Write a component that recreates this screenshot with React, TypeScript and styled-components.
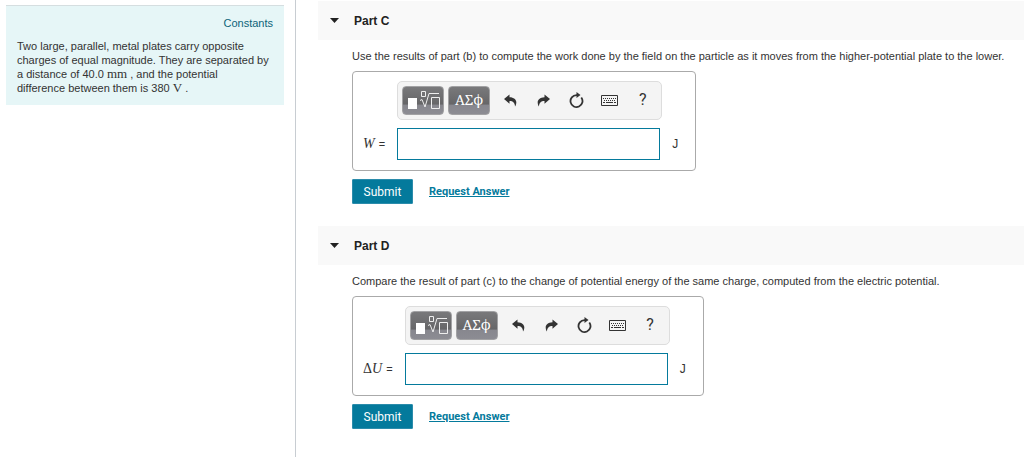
import React, { useId } from "react";
import styled, { createGlobalStyle } from "styled-components";

const GlobalStyle = createGlobalStyle`
  *, *::before, *::after { box-sizing: border-box; }
  body {
    margin: 0;
    background: #fff;
    color: #333;
    font: 11px/14px "Liberation Sans", Arial, sans-serif;
  }
`;

const Page = styled.div`
  display: flex;
  align-items: stretch;
  min-height: 100vh;
`;

const Sidebar = styled.aside`
  flex: 0 0 296px;
  padding: 5px 11px 0 6px;
  border-right: 1px solid #c8cdd2;
`;

const ProblemCard = styled.section`
  padding: 10px 11px;
  border-top: 1px solid #d5dee0;
  background: #e6f6f7;
`;

const ConstantsRow = styled.div`
  display: flex;
  justify-content: flex-end;
  margin-bottom: 9px;
`;

const ConstantsLink = styled.a`
  color: #0d6379;
  text-decoration: none;
`;

const Statement = styled.p`
  margin: 0;
`;

const MathText = styled.span`
  font-family: "Liberation Serif", "Times New Roman", serif;
  font-size: 13px;
  line-height: 1;
`;

const Main = styled.main`
  flex: 1;
  min-width: 0;
  padding: 1px 0 0 22px;
`;

const PartSection = styled.section`
  margin-bottom: 22px;
`;

const PartHeader = styled.h2`
  margin: 0;
  background: #f9f9f9;
  font-size: 12px;
`;

const PartToggle = styled.button`
  display: flex;
  align-items: center;
  gap: 15px;
  width: 100%;
  height: 39px;
  padding: 0 12px;
  border: 0;
  background: transparent;
  color: #222;
  font: bold 12px/14px "Liberation Sans", Arial, sans-serif;
  text-align: left;
`;

const PartBody = styled.div`
  padding: 9px 0 0 34px;
`;

const Prompt = styled.p`
  margin: 0 0 8px;
`;

const AnswerBox = styled.div`
  display: inline-grid;
  grid-template-columns: auto 265px auto;
  align-items: center;
  row-gap: 8px;
  padding: 9px 17px 10px 10px;
  border: 1px solid #aaa;
  border-radius: 4px;
  vertical-align: top;
`;

const Toolbar = styled.div`
  grid-column: 2;
  display: flex;
  align-items: center;
  gap: 4px;
  height: 39px;
  padding: 0 0 1px 4px;
  border: 1px solid #ddd;
  border-radius: 5px;
  background: #f4f4f4;
`;

const PaletteButton = styled.button`
  display: flex;
  flex: none;
  align-items: center;
  justify-content: center;
  width: 42px;
  height: 29px;
  padding: 0;
  border: 1px solid #a2a2a4;
  border-radius: 4px;
  background: linear-gradient(#79797b, #666668 64%, #87878e 66%, #8c8c93);
  color: #fff;
  font: 14px/18px "Noto Serif", "DejaVu Serif", serif;
`;

const ToolGroup = styled.div`
  display: flex;
  flex: none;
  align-items: center;
`;

const ToolButton = styled.button`
  display: flex;
  flex: none;
  align-items: center;
  justify-content: center;
  width: 33px;
  height: 29px;
  padding: 0;
  border: 0;
  background: transparent;
  color: #333;
  font: 16px/18px Roboto, Arial, sans-serif;
`;

const AnswerLabel = styled.label`
  grid-column: 1;
  padding-right: 12px;
`;

const Variable = styled.span`
  margin-right: 1px;
  font: 14px/14px "Liberation Serif", "Times New Roman", serif;
`;

const AnswerInput = styled.input`
  width: 263px;
  height: 32px;
  padding: 0 8px;
  border: 1px solid #047a9c;
  border-radius: 0;
  background: #fff;
  color: #333;
  font: inherit;
  outline: 0;
`;

const Unit = styled.span`
  padding-left: 10px;
  font-size: 12px;
`;

const Actions = styled.div`
  display: flex;
  align-items: center;
  gap: 16px;
  margin-top: 8px;
`;

const SubmitButton = styled.button`
  width: 61px;
  height: 25px;
  padding: 0;
  border: 1px solid #2b8cab;
  border-radius: 1px;
  background: #047a9c;
  color: #fff;
  font: 12px/14px Roboto, Arial, sans-serif;
`;

const RequestLink = styled.a`
  color: #047a9c;
  font: bold 11px/13px Roboto, Arial, sans-serif;
  text-decoration: underline;
`;

const Caret = () => (
  <svg width="9" height="5" viewBox="0 0 9 5" aria-hidden="true">
    <path d="M0 0h9L4.5 5z" fill="#222" />
  </svg>
);

const RootIcon = () => (
  <svg width="34" height="20" viewBox="0 0 34 20" fill="none" stroke="#eee" aria-hidden="true">
    <path d="M2 8h9v11H2z" fill="#fff" stroke="none" />
    <path d="M15.500 1.500h4v5h-4zM25.500 7.500h8v11h-8z" />
    <path d="M14 10.500l2-1 3 7.500 4-13.500h10" />
  </svg>
);

const ArrowIcon = ({ flipped = false }: { flipped?: boolean }) => (
  <svg width="13" height="13" viewBox="0 0 13 13" aria-hidden="true">
    <path
      transform={flipped ? "matrix(-1 0 0 1 13 0)" : undefined}
      d="M0 5L5.500 0.500V3.200C10 3.200 12.500 6 12.300 8.500C12.300 10 11.800 11.500 11 12.500C11 9 9 7 5.500 7V9.700Z"
      fill="currentColor"
    />
  </svg>
);

const ResetIcon = () => (
  <svg width="15" height="17" viewBox="0 0 15 17" fill="none" aria-hidden="true">
    <path d="M8.500 3.100H7.500A6 6 0 1 0 12.300 5.500" stroke="currentColor" strokeWidth="1.800" />
    <path d="M7.500 0L11.500 3.100 7.500 6z" fill="currentColor" />
  </svg>
);

const KeyboardIcon = () => (
  <svg width="17" height="11" viewBox="0 0 17 11" fill="none" stroke="currentColor" aria-hidden="true">
    <path d="M0.500 0.500h16v10h-16z" />
    <path d="M2 3.500h13" strokeDasharray="1 1" />
    <path d="M3 5.500h12" strokeDasharray="1 1" />
    <path d="M2 7.500h2M5 7.500h7M13 7.500h2" />
  </svg>
);

interface PartProps {
  title: string;
  prompt: string;
  variable: React.ReactNode;
  unit: string;
}

const Part = ({ title, prompt, variable, unit }: PartProps) => {
  const inputId = useId();
  return (
    <PartSection>
      <PartHeader>
        <PartToggle type="button" aria-expanded="true">
          <Caret />
          {title}
        </PartToggle>
      </PartHeader>
      <PartBody>
        <Prompt>{prompt}</Prompt>
        <AnswerBox>
          <Toolbar role="toolbar" aria-label="Equation tools">
            <PaletteButton type="button" aria-label="Templates">
              <RootIcon />
            </PaletteButton>
            <PaletteButton type="button">ΑΣϕ</PaletteButton>
            <ToolGroup>
              <ToolButton type="button" aria-label="Undo">
                <ArrowIcon />
              </ToolButton>
              <ToolButton type="button" aria-label="Redo">
                <ArrowIcon flipped />
              </ToolButton>
              <ToolButton type="button" aria-label="Reset">
                <ResetIcon />
              </ToolButton>
              <ToolButton type="button" aria-label="Keyboard shortcuts">
                <KeyboardIcon />
              </ToolButton>
              <ToolButton type="button">?</ToolButton>
            </ToolGroup>
          </Toolbar>
          <AnswerLabel htmlFor={inputId}>
            <Variable>{variable}</Variable> =
          </AnswerLabel>
          <AnswerInput id={inputId} type="text" />
          <Unit>{unit}</Unit>
        </AnswerBox>
        <Actions>
          <SubmitButton type="button">Submit</SubmitButton>
          <RequestLink href="#request">Request Answer</RequestLink>
        </Actions>
      </PartBody>
    </PartSection>
  );
};

export default function App() {
  return (
    <>
      <GlobalStyle />
      <Page>
        <Sidebar>
          <ProblemCard>
            <ConstantsRow>
              <ConstantsLink href="#constants">Constants</ConstantsLink>
            </ConstantsRow>
            <Statement>
              Two large, parallel, metal plates carry opposite charges of equal magnitude. They are
              separated by a distance of 40.0 <MathText>mm</MathText> , and the potential
              difference&nbsp;between them is 380 <MathText>V</MathText> .
            </Statement>
          </ProblemCard>
        </Sidebar>
        <Main>
          <Part
            title="Part C"
            prompt="Use the results of part (b) to compute the work done by the field on the particle as it moves from the higher-potential plate to the lower."
            variable={<i>W</i>}
            unit="J"
          />
          <Part
            title="Part D"
            prompt="Compare the result of part (c) to the change of potential energy of the same charge, computed from the electric potential."
            variable={
              <>
                Δ<i>U</i>
              </>
            }
            unit="J"
          />
        </Main>
      </Page>
    </>
  );
}
